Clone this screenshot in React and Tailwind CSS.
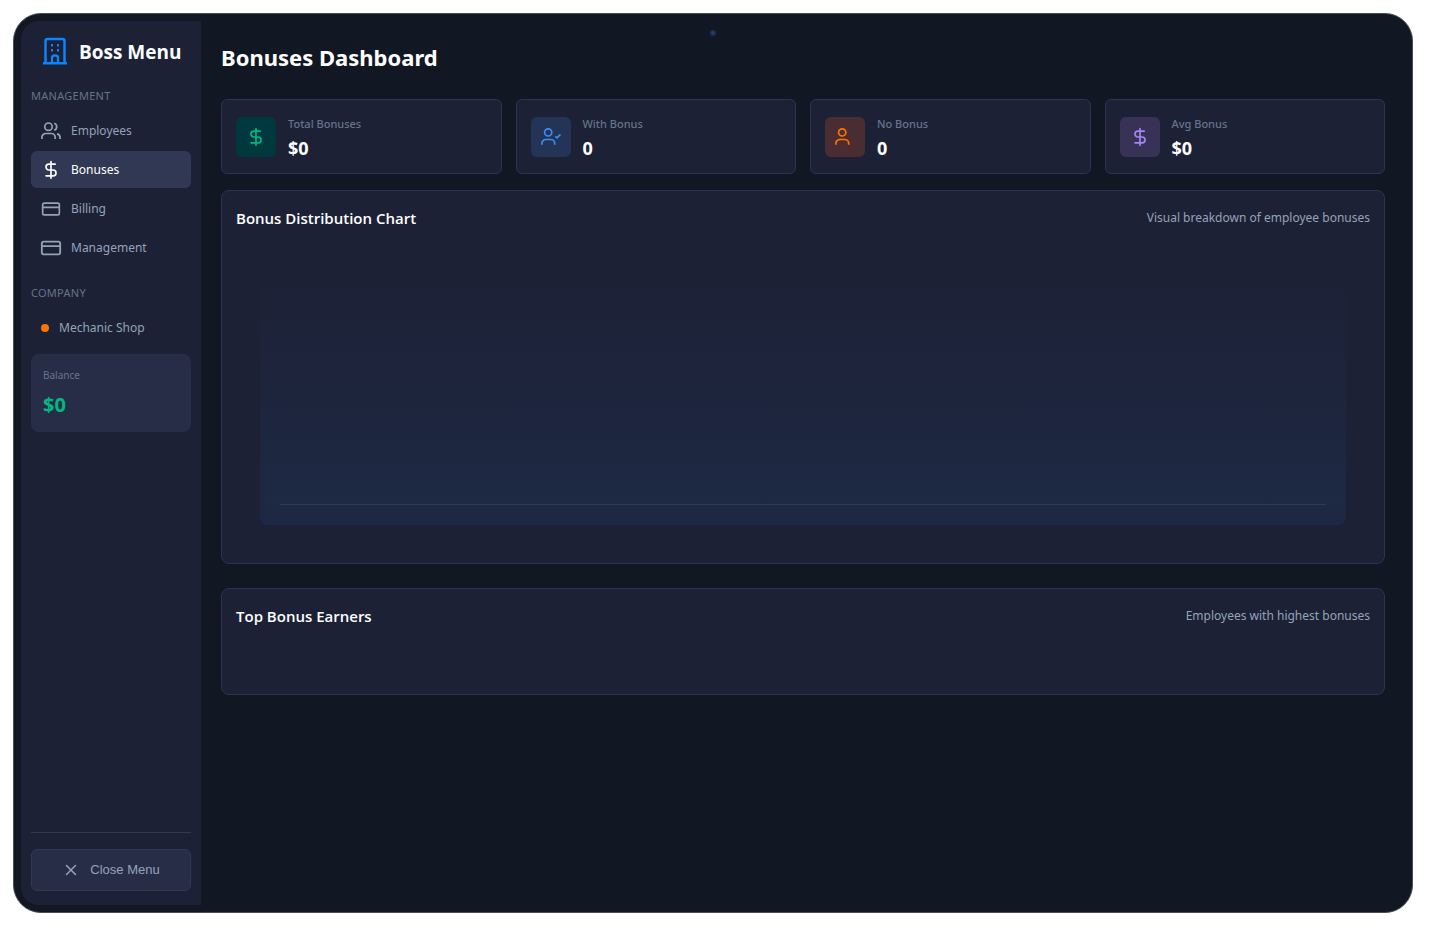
import { CreditCard, DollarSign, X } from "lucide-react";

function BuildingIcon() {
  return (
    <svg width="28" height="28" viewBox="0 0 28 28" fill="none" stroke="#0a84ff" strokeWidth="2.5" className="shrink-0" aria-hidden="true">
      <path d="M4.500 26V4a2 2 0 0 1 2-2h15a2 2 0 0 1 2 2v22M2 26.200h24" />
      <path d="M11 26v-5a2.500 2.500 0 0 1 2.500-2.500h1A2.500 2.500 0 0 1 17 21v5" strokeWidth="2.300" />
      <path d="M11 7v2.500M17 7v2.500M11 12v2.500M17 12v2.500" strokeWidth="2" />
    </svg>
  );
}

function UsersIcon() {
  return (
    <svg width="20" height="20" viewBox="0 0 20 20" fill="none" stroke="currentColor" strokeWidth="1.700" className="shrink-0" aria-hidden="true">
      <circle cx="7.500" cy="5.700" r="3.700" />
      <path d="M.9 18v-1.500a4 4 0 0 1 4-4h5.300a4 4 0 0 1 4 4V18M13.200 2.200a3.700 3.700 0 0 1 0 7M16 12.800a4 4 0 0 1 3.100 3.900V18" />
    </svg>
  );
}

function PersonIcon({ checked }) {
  return (
    <svg width="20" height="20" viewBox="0 0 20 20" fill="none" stroke="currentColor" strokeWidth="1.700" className="shrink-0" aria-hidden="true">
      <circle cx="7.200" cy="5.400" r="3.600" />
      <path d="M.9 17.800v-1.300a4 4 0 0 1 4-4h4.800a4 4 0 0 1 4 4v1.300" />
      {checked && <path d="m14.300 9.300 1.700 1.600 3.500-3.500" />}
    </svg>
  );
}

const nav = [
  { label: "Employees", icon: <UsersIcon /> },
  { label: "Bonuses", icon: <DollarSign size={20} className="shrink-0" />, active: true },
  { label: "Billing", icon: <CreditCard size={20} className="shrink-0" /> },
  { label: "Management", icon: <CreditCard size={22} className="shrink-0" /> },
];

const stats = [
  { label: "Total Bonuses", value: "$0", tile: "bg-[#003840] text-[#00b981]", icon: <DollarSign size={20} /> },
  { label: "With Bonus", value: "0", tile: "bg-[#233457] text-[#3b8cf5]", icon: <PersonIcon checked /> },
  { label: "No Bonus", value: "0", tile: "bg-[#4a2d32] text-[#ff7300]", icon: <PersonIcon /> },
  { label: "Avg Bonus", value: "$0", tile: "bg-[#383256] text-[#a884f5]", icon: <DollarSign size={20} /> },
];

function Panel({ title, note, children }) {
  return (
    <section className="rounded-lg border border-[#2e3450] bg-[#1d2136] px-3.5 pt-[13px]">
      <div className="flex h-7 items-center justify-between">
        <h2 className="font-['Open_Sans',sans-serif] text-[15px] font-semibold text-white">{title}</h2>
        <p className="text-xs text-[#94a3b8]">{note}</p>
      </div>
      {children}
    </section>
  );
}

export default function App() {
  return (
    <div className="h-screen bg-white pt-[13px] pr-[18px] pb-[23px] pl-[13px] font-['Noto_Sans','Open_Sans',sans-serif]">
      <div className="flex h-full rounded-[28px] border border-[#4a4d57] bg-[#111723] p-[7px]">
        <aside className="flex w-[180px] shrink-0 flex-col rounded-l-[18px] bg-[#1d2136] px-2.5 pt-3 pb-3.5">
          <div className="flex h-9 items-center gap-2.5 pl-2.5">
            <BuildingIcon />
            <span className="pt-0.5 font-['Open_Sans',sans-serif] text-[19px] font-bold whitespace-nowrap text-white">Boss Menu</span>
          </div>
          <h2 className="mt-[19px] text-[11px] leading-4 tracking-wide text-[#64748b]">MANAGEMENT</h2>
          <nav className="mt-2 flex flex-col gap-0.5">
            {nav.map((item) => (
              <a
                key={item.label}
                href="#"
                className={
                  item.active
                    ? "flex h-[37px] items-center gap-2.5 rounded-md bg-[#303853] px-2.5 text-xs text-white"
                    : "flex h-[37px] items-center gap-2.5 rounded-md px-2.5 text-xs text-[#94a3b8]"
                }
              >
                <span className="flex w-5 shrink-0 justify-center">{item.icon}</span>
                {item.label}
              </a>
            ))}
          </nav>
          <h2 className="mt-[19px] text-[11px] leading-4 tracking-wide text-[#64748b]">COMPANY</h2>
          <div className="mt-2 flex h-9 items-center gap-2.5 px-2.5 pt-0.5 text-xs text-[#94a3b8]">
            <span className="size-2 rounded-full bg-[#ff7300]" />
            Mechanic Shop
          </div>
          <div className="mt-[9px] h-[78px] rounded-lg bg-[#282d47] px-3 pt-3">
            <p className="text-[10px] leading-[18px] text-[#64748b]">Balance</p>
            <p className="mt-[9px] font-['Open_Sans',sans-serif] text-xl leading-6 font-bold text-[#00b981]">$0</p>
          </div>
          <div className="mt-auto border-t border-[#303853] pt-4">
            <button
              type="button"
              className="flex h-[42px] w-full items-center justify-center gap-2.5 rounded-md border border-[#303853] bg-[#282d47] font-['Liberation_Sans',sans-serif] text-[13px] text-[#94a3b8]"
            >
              <X size={18} />
              Close Menu
            </button>
          </div>
        </aside>
        <main className="relative min-w-0 flex-1 px-5 pt-5">
          <span className="absolute top-[9px] left-1/2 size-1.5 -translate-x-[93px] rounded-full bg-radial from-[#1d4478] to-[#142238]" />
          <h1 className="text-[22px] leading-8 font-bold text-white">Bonuses Dashboard</h1>
          <div className="mt-[26px] grid grid-cols-4 gap-3.5">
            {stats.map((stat) => (
              <div key={stat.label} className="flex h-[75px] items-center gap-3 rounded-md border border-[#2e3450] bg-[#1d2136] px-3.5">
                <div className={"flex size-10 items-center justify-center rounded-md " + stat.tile}>{stat.icon}</div>
                <div>
                  <p className="text-[11px] leading-5 font-medium text-[#64748b]">{stat.label}</p>
                  <p className="mt-0.5 font-['Open_Sans',sans-serif] text-lg leading-6 font-bold text-white">{stat.value}</p>
                </div>
              </div>
            ))}
          </div>
          <div className="mt-4 flex flex-col gap-6">
            <Panel title="Bonus Distribution Chart" note="Visual breakdown of employee bonuses">
              <div className="mx-6 mt-[33px] mb-[38px] flex h-[260px] flex-col justify-end rounded-lg bg-linear-to-t from-[#1d2944] to-[#1d2136] px-5 pb-5">
                <div className="h-px bg-[#2e3953]" />
              </div>
            </Panel>
            <Panel title="Top Bonus Earners" note="Employees with highest bonuses">
              <div className="h-16" />
            </Panel>
          </div>
        </main>
      </div>
    </div>
  );
}
